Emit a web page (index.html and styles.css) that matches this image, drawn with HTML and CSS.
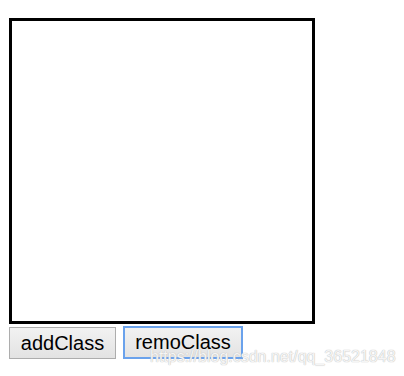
FILE: index.html
```html
<!DOCTYPE html>
<html>
<head>
<meta charset="utf-8">
<link rel="stylesheet" href="styles.css">
</head>
<body>
<div class="page">
  <div class="box"></div>
  <div class="controls">
    <button class="btn">addClass</button>
    <button class="btn focused">remoClass</button>
  </div>
  <div class="watermark">https://blog.csdn.net/qq_36521848</div>
</div>
</body>
</html>
```
FILE: styles.css
```css
html, body {
  margin: 0;
  padding: 0;
  background: #ffffff;
}
.page {
  position: relative;
  width: 404px;
  height: 376px;
  padding: 18px 0 0 9px;
  box-sizing: border-box;
  font-family: "Liberation Sans", Arial, sans-serif;
}
.box {
  width: 300px;
  height: 300px;
  border: 3px solid #000;
}
.controls {
  display: flex;
  align-items: flex-start;
  gap: 7px;
  margin-top: 3px;
}
.btn {
  font-family: "Liberation Sans", Arial, sans-serif;
  font-size: 20px;
  height: 32px;
  width: 107px;
  padding: 0;
  margin: 0;
  background: linear-gradient(#f2f2f2, #e3e3e3);
  border: 1px solid #adadad;
  border-radius: 0;
  color: #000;
  line-height: 30px;
  text-align: center;
}
.btn.focused {
  width: 120px;
  height: 33px;
  margin-top: -1px;
  border: 2px solid #6aa2ec;
  line-height: 29px;
}
.watermark {
  position: absolute;
  left: 150px;
  top: 348px;
  font-size: 16px;
  color: rgba(255, 255, 255, 0.85);
  text-shadow: 0 0 1px #bdbdbd, 0 0 1px #c8c8c8;
  white-space: nowrap;
}
```
